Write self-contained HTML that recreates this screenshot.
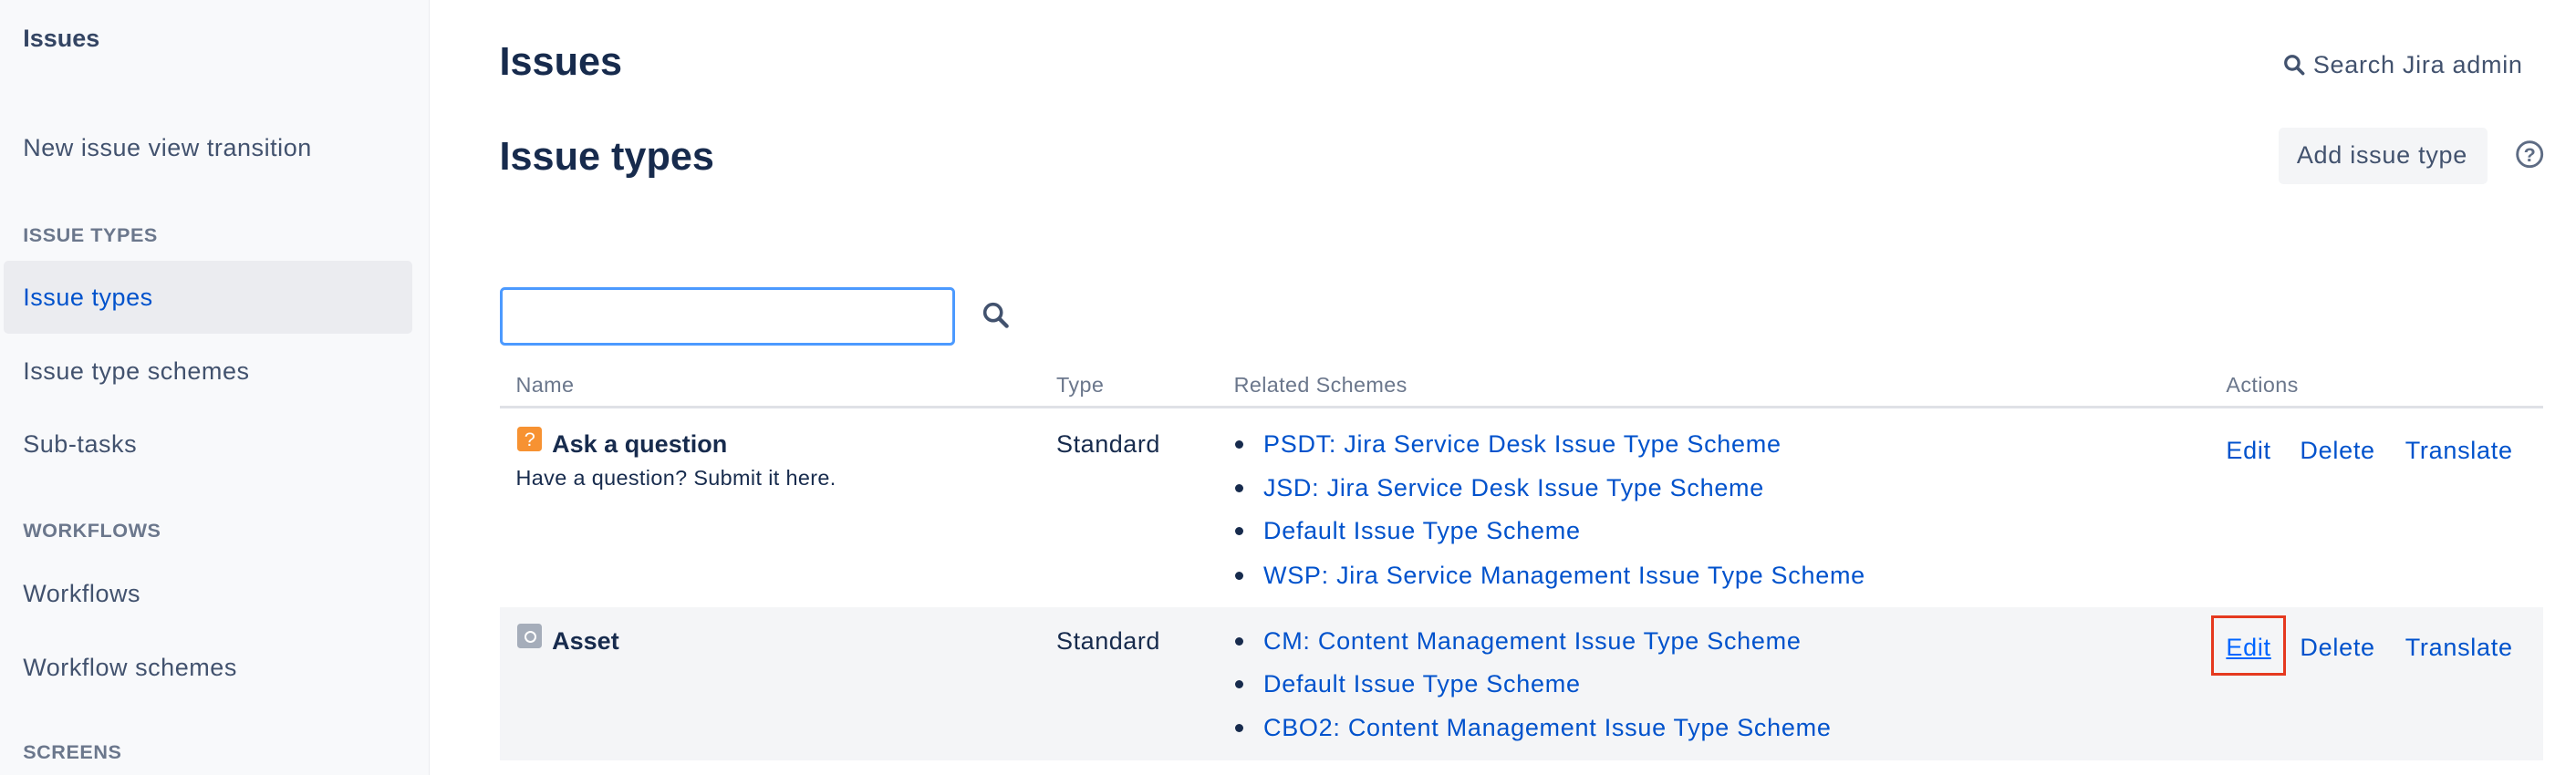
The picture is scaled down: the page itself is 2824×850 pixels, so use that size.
<!DOCTYPE html>
<html><head><meta charset="utf-8"><style>
html,body{margin:0;padding:0;background:#fff;overflow:hidden}
body{width:2824px;height:850px}
#w{zoom:1.80102;width:1568px;height:472px;position:relative;font-family:"Liberation Sans",Arial,sans-serif;color:#172b4d}
.a{position:absolute;white-space:nowrap;line-height:1}
#side{position:absolute;left:0;top:0;width:261px;height:472px;background:#f8f9fb;border-right:1px solid #ebecf0}
.si{font-size:15px;color:#42526e;letter-spacing:.3px}
.sh{font-size:12px;font-weight:bold;color:#6b778c;letter-spacing:.3px}
.lk{color:#0052cc;font-size:15px;letter-spacing:.4px}
.th{font-size:13px;color:#6b778c;letter-spacing:.2px}
.bul{position:absolute;width:5px;height:5px;border-radius:50%;background:#172b4d}
</style></head><body><div id="w">
<div id="side">
<div class="a" style="left:14px;top:16px;font-size:15px;font-weight:bold;color:#344563">Issues</div>
<div class="a si" style="left:14px;top:83px">New issue view transition</div>
<div class="a sh" style="left:14px;top:137px">ISSUE TYPES</div>
<div style="position:absolute;left:2px;top:159px;width:249px;height:44px;background:#ebecf0;border-radius:3px"></div>
<div class="a" style="left:14px;top:174px;font-size:15px;color:#0052cc;letter-spacing:.3px">Issue types</div>
<div class="a si" style="left:14px;top:219px">Issue type schemes</div>
<div class="a si" style="left:14px;top:263px">Sub-tasks</div>
<div class="a sh" style="left:14px;top:317px">WORKFLOWS</div>
<div class="a si" style="left:14px;top:354px">Workflows</div>
<div class="a si" style="left:14px;top:399px">Workflow schemes</div>
<div class="a sh" style="left:14px;top:452px">SCREENS</div>
</div>
<div class="a" style="left:304px;top:26px;font-size:24px;font-weight:bold;color:#172b4d">Issues</div>
<div class="a" style="left:304px;top:84px;font-size:24px;font-weight:bold;color:#172b4d">Issue types</div>
<svg style="position:absolute;left:1390px;top:33px" width="14" height="14" viewBox="0 0 14 14"><circle cx="5.5" cy="5.5" r="4" fill="none" stroke="#42526e" stroke-width="1.8"/><path d="M8.5 8.5l3.5 3.5" stroke="#42526e" stroke-width="2" stroke-linecap="round"/></svg>
<div class="a" style="left:1408px;top:32px;font-size:15px;color:#42526e;letter-spacing:.4px">Search Jira admin</div>
<div style="position:absolute;left:1387px;top:78px;width:127px;height:34px;background:#f4f5f7;border-radius:3px"></div>
<div class="a" style="left:1398px;top:87px;font-size:15px;color:#42526e;letter-spacing:.4px">Add issue type</div>
<svg style="position:absolute;left:1531px;top:85px" width="18" height="18" viewBox="0 0 18 18"><circle cx="9" cy="9" r="7.5" fill="none" stroke="#5e6c84" stroke-width="1.6"/><text x="9" y="13.3" font-size="12" font-weight="bold" text-anchor="middle" fill="#5e6c84" font-family="Liberation Sans">?</text></svg>
<div style="position:absolute;left:304px;top:175px;width:274px;height:32px;border:2px solid #4c9aff;border-radius:3px;background:#fff"></div>
<svg style="position:absolute;left:598px;top:184px" width="17" height="17" viewBox="0 0 17 17"><circle cx="6.5" cy="6.5" r="5" fill="none" stroke="#42526e" stroke-width="2"/><path d="M10.3 10.3l4.5 4.5" stroke="#42526e" stroke-width="2.4" stroke-linecap="round"/></svg>
<div class="a th" style="left:314px;top:228px">Name</div>
<div class="a th" style="left:643px;top:228px">Type</div>
<div class="a th" style="left:751px;top:228px">Related Schemes</div>
<div class="a th" style="left:1355px;top:228px">Actions</div>
<div style="position:absolute;left:304px;top:247px;width:1244px;height:2px;background:#dfe1e6"></div>
<div style="position:absolute;left:315px;top:260px;width:15px;height:15px;background:#f79232;border-radius:2px;color:#fff;font-size:12px;text-align:center;line-height:15px">?</div>
<div class="a" style="left:336px;top:263px;font-size:15px;font-weight:bold;color:#172b4d">Ask a question</div>
<div class="a" style="left:314px;top:285px;font-size:13px;color:#172b4d;letter-spacing:.2px">Have a question? Submit it here.</div>
<div class="a" style="left:643px;top:263px;font-size:15px;letter-spacing:.3px">Standard</div>
<div class="bul" style="left:752px;top:268px"></div><div class="a lk" style="left:769px;top:263px">PSDT: Jira Service Desk Issue Type Scheme</div>
<div class="bul" style="left:752px;top:295px"></div><div class="a lk" style="left:769px;top:290px">JSD: Jira Service Desk Issue Type Scheme</div>
<div class="bul" style="left:752px;top:321px"></div><div class="a lk" style="left:769px;top:316px">Default Issue Type Scheme</div>
<div class="bul" style="left:752px;top:348px"></div><div class="a lk" style="left:769px;top:343px">WSP: Jira Service Management Issue Type Scheme</div>
<div class="a lk" style="left:1355px;top:267px">Edit</div>
<div class="a lk" style="left:1400px;top:267px">Delete</div>
<div class="a lk" style="left:1464px;top:267px">Translate</div>
<div style="position:absolute;left:304px;top:370px;width:1244px;height:93px;background:#f4f5f7"></div>
<div style="position:absolute;left:315px;top:380px;width:15px;height:15px;background:#a5adba;border-radius:2px"><div style="position:absolute;left:4px;top:4px;width:5px;height:5px;border:1.3px solid #fff;border-radius:50%"></div></div>
<div class="a" style="left:336px;top:383px;font-size:15px;font-weight:bold;color:#172b4d">Asset</div>
<div class="a" style="left:643px;top:383px;font-size:15px;letter-spacing:.3px">Standard</div>
<div class="bul" style="left:752px;top:388px"></div><div class="a lk" style="left:769px;top:383px">CM: Content Management Issue Type Scheme</div>
<div class="bul" style="left:752px;top:414px"></div><div class="a lk" style="left:769px;top:409px">Default Issue Type Scheme</div>
<div class="bul" style="left:752px;top:441px"></div><div class="a lk" style="left:769px;top:436px">CBO2: Content Management Issue Type Scheme</div>
<div style="position:absolute;left:1346px;top:375px;width:42px;height:33px;border:2px solid #e5391f"></div>
<div class="a lk" style="left:1355px;top:387px;text-decoration:underline;color:#0065ff">Edit</div>
<div class="a lk" style="left:1400px;top:387px">Delete</div>
<div class="a lk" style="left:1464px;top:387px">Translate</div>
</div></body></html>
